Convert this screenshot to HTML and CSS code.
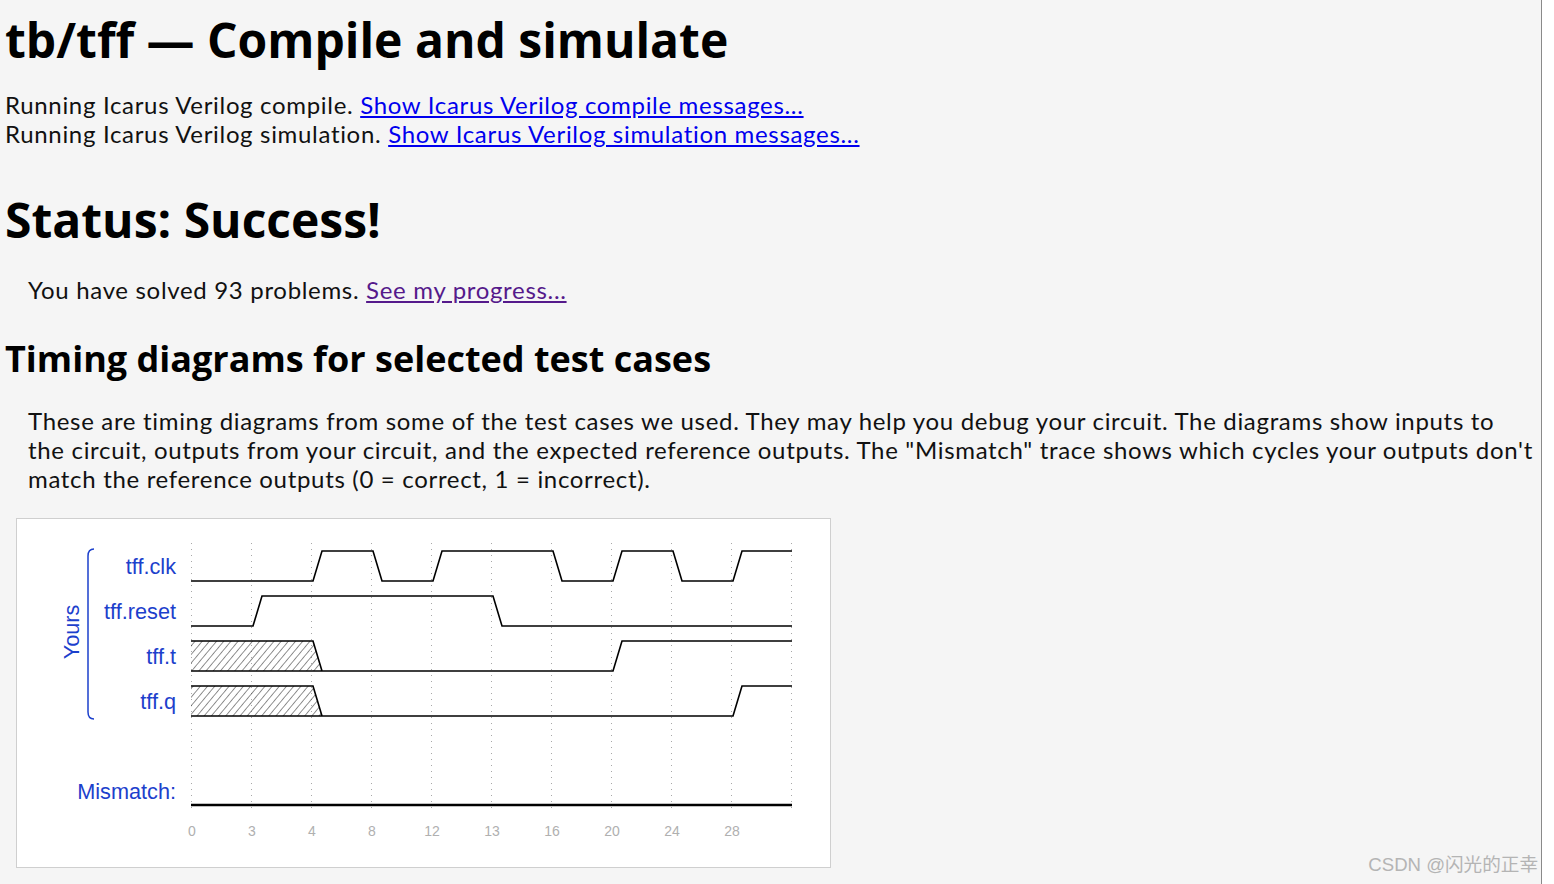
FILE: index.html
```html
<!DOCTYPE html>
<html lang="en">
<head>
<meta charset="utf-8">
<title>tb/tff — Compile and simulate</title>
<link rel="stylesheet" href="styles.css">
</head>
<body>
<div class="page">
  <main class="content">
    <h1 class="title">tb/tff — Compile and simulate</h1>
    <p class="log">Running Icarus Verilog compile. <a class="link" href="#">Show Icarus Verilog compile messages...</a><br>Running Icarus Verilog simulation. <a class="link" href="#">Show Icarus Verilog simulation messages...</a></p>
    <h2 class="status">Status: Success!</h2>
    <p class="indent solved">You have solved 93 problems. <a class="link visited" href="#">See my progress...</a></p>
    <h3 class="section">Timing diagrams for selected test cases</h3>
    <p class="indent desc">These are timing diagrams from some of the test cases we used. They may help you debug your circuit. The diagrams show inputs to the circuit, outputs from your circuit, and the expected reference outputs. The "Mismatch" trace shows which cycles your outputs don't match the reference outputs (0 = correct, 1 = incorrect).</p>
    <div class="diagram">
      <svg class="wave" width="813" height="348" viewBox="0 0 813 348" xmlns="http://www.w3.org/2000/svg">
        <defs>
          <pattern id="hatch" width="5.5" height="5.5" patternUnits="userSpaceOnUse" patternTransform="rotate(40)">
            <line x1="0" y1="0" x2="0" y2="5.5" stroke="#222" stroke-width="1"/>
          </pattern>
        </defs>
        <g class="grid">
          <line x1="174.5" y1="24" x2="174.5" y2="292"/>
          <line x1="234.5" y1="24" x2="234.5" y2="292"/>
          <line x1="294.5" y1="24" x2="294.5" y2="292"/>
          <line x1="354.5" y1="24" x2="354.5" y2="292"/>
          <line x1="414.5" y1="24" x2="414.5" y2="292"/>
          <line x1="474.5" y1="24" x2="474.5" y2="292"/>
          <line x1="534.5" y1="24" x2="534.5" y2="292"/>
          <line x1="594.5" y1="24" x2="594.5" y2="292"/>
          <line x1="654.5" y1="24" x2="654.5" y2="292"/>
          <line x1="714.5" y1="24" x2="714.5" y2="292"/>
          <line x1="774.5" y1="24" x2="774.5" y2="292"/>
        </g>
        <g class="labels">
          <text x="159" y="55">tff.clk</text>
          <text x="159" y="100">tff.reset</text>
          <text x="159" y="145">tff.t</text>
          <text x="159" y="190">tff.q</text>
          <text x="159" y="280">Mismatch:</text>
        </g>
        <text class="yours" transform="translate(62,113) rotate(-90)">Yours</text>
        <path class="bracket" d="M77,30 Q71,30 71,37 L71,193 Q71,200 77,200"/>
        <g class="sig">
          <path d="M174,62 L296,62 L305,32 L356,32 L365,62 L416,62 L425,32 L536,32 L545,62 L596,62 L605,32 L656,32 L665,62 L716,62 L725,32 L775,32"/>
          <path d="M174,107 L236,107 L245,77 L476,77 L485,107 L775,107"/>
          <path class="hatched" d="M174,122 L296,122 L305,152 L174,152 Z"/>
          <path d="M174,122 L296,122 L305,152 M174,152 L596,152 L605,122 L775,122"/>
          <path class="hatched" d="M174,167 L296,167 L305,197 L174,197 Z"/>
          <path d="M174,167 L296,167 L305,197 M174,197 L716,197 L725,167 L775,167"/>
          <path class="thick" d="M174,286 L775,286"/>
        </g>
        <g class="axis">
          <text x="175" y="317">0</text>
          <text x="235" y="317">3</text>
          <text x="295" y="317">4</text>
          <text x="355" y="317">8</text>
          <text x="415" y="317">12</text>
          <text x="475" y="317">13</text>
          <text x="535" y="317">16</text>
          <text x="595" y="317">20</text>
          <text x="655" y="317">24</text>
          <text x="715" y="317">28</text>
        </g>
      </svg>
    </div>
  </main>
  <div class="watermark">CSDN @闪光的正幸</div>
</div>
</body>
</html>
```

FILE: styles.css
```css
html, body {
  margin: 0;
  padding: 0;
  background: #ffffff;
}

.page {
  position: relative;
  width: 1541px;
  height: 884px;
  background: #f5f5f5;
  border-right: 1px solid #8a8a8a;
  overflow: hidden;
}

.content {
  padding: 0 0 0 5px;
  width: 1531px;
  font-family: Lato, "Noto Sans", sans-serif;
  color: #111;
}

.title,
.status,
.section {
  font-family: "Open Sans", "Noto Sans", sans-serif;
  font-weight: 700;
  color: #000;
  line-height: 1.2;
  margin: 0;
}

.title {
  font-size: 48px;
  margin-top: 11px;
}

.log {
  font-size: 24px;
  line-height: 29px;
  letter-spacing: 0.68px;
  margin: 21px 0 0;
}

.status {
  font-size: 48px;
  margin-top: 43px;
}

.indent {
  padding-left: 23px;
  font-size: 24px;
  line-height: 29px;
  letter-spacing: 0.68px;
}

.solved {
  margin: 27px 0 0;
}

.section {
  font-size: 36px;
  margin-top: 33px;
}

.desc {
  margin: 26px 0 0;
}

.link {
  color: #0000ee;
  text-decoration: underline;
}

.link.visited {
  color: #551a8b;
}

.diagram {
  margin: 25px 0 0 11px;
  width: 813px;
  height: 348px;
  background: #ffffff;
  border: 1px solid #cfcfcf;
}

.wave {
  display: block;
}

.grid line {
  stroke: #a8a8a8;
  stroke-width: 1;
  stroke-dasharray: 1 5;
}

.labels text,
.yours {
  font-family: "Liberation Sans", Arial, sans-serif;
  font-size: 21.7px;
  fill: #1c40cc;
}

.labels text {
  text-anchor: end;
}

.yours {
  text-anchor: middle;
}

.bracket {
  fill: none;
  stroke: #1c40cc;
  stroke-width: 1.5;
}

.sig path {
  fill: none;
  stroke: #000;
  stroke-width: 1.6;
  stroke-linejoin: miter;
}

.sig path.hatched {
  fill: url(#hatch);
  stroke: none;
}

.sig path.thick {
  stroke-width: 2.4;
}

.axis text {
  font-family: "Liberation Sans", Arial, sans-serif;
  font-size: 14px;
  fill: #b0b0b0;
  text-anchor: middle;
}

.watermark {
  position: absolute;
  right: 3px;
  bottom: 8px;
  font-family: "Liberation Sans", "Noto Sans CJK SC", sans-serif;
  font-size: 18.6px;
  color: #b4b4b4;
}
```
